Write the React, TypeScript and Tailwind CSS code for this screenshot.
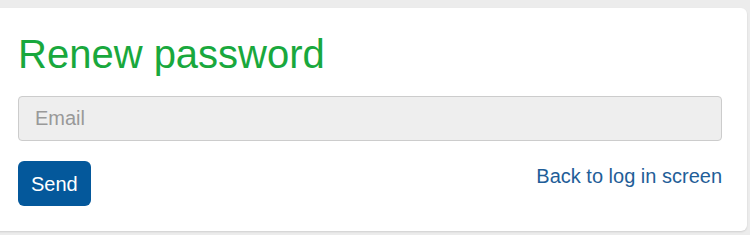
export default function App() {
  return (
    <div className="min-h-[235px] bg-[#ececec] pt-[8px] pb-[4px] overflow-hidden" style={{ fontFamily: '"Liberation Sans", Arial, sans-serif' }}>
      <div className="-ml-[8px] w-[755px] h-[223px] bg-white rounded-[6px] shadow-[0_1px_2px_rgba(0,0,0,0.12)] pl-[26px] pr-[25px] pt-[24px]">
        <h1 className="text-[40px] leading-[44px] text-[#19a83d] font-normal">Renew password</h1>
        <input
          type="text"
          placeholder="Email"
          className="mt-[20px] block w-full h-[45px] bg-[#eeeeee] border border-[#cccccc] rounded-[4px] px-[16px] text-[20px] text-[#555] placeholder:text-[#999999] outline-none"
        />
        <div className="mt-[20px] flex items-start justify-between">
          <button className="h-[45px] px-[13px] bg-[#04589b] text-white text-[20px] rounded-[6px]">Send</button>
          <a href="#" className="mt-[3px] text-[20px] leading-[24px] text-[#1f5e98]">Back to log in screen</a>
        </div>
      </div>
    </div>
  );
}
